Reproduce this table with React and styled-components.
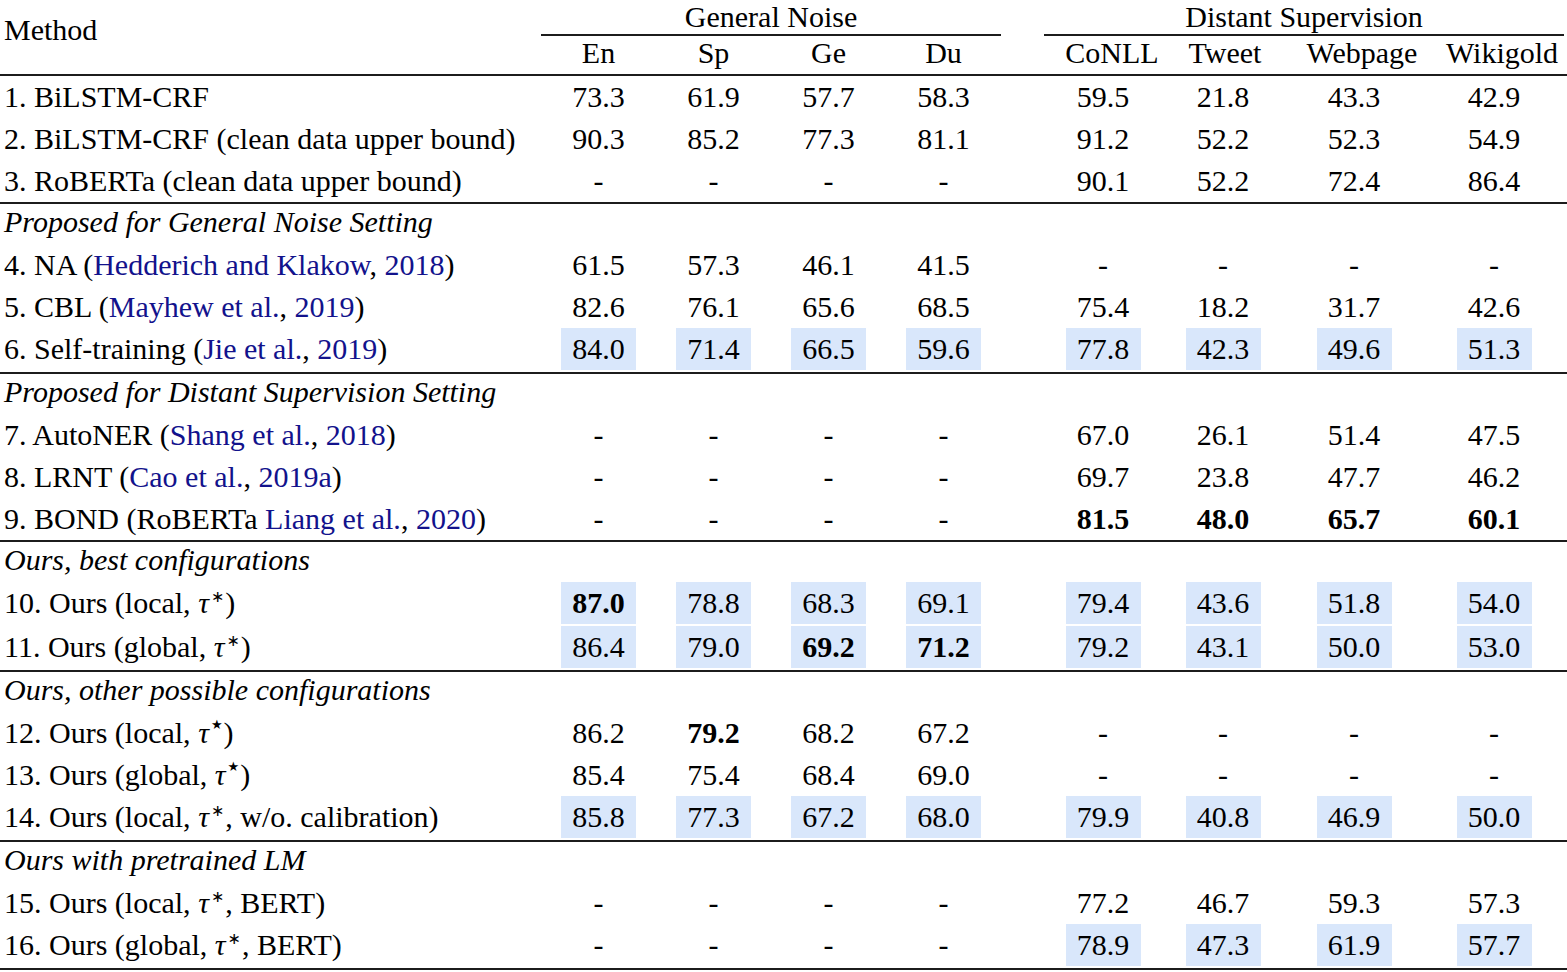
import React from "react";
import styled, { createGlobalStyle } from "styled-components";

const COLS = "541px repeat(4, 115px) 43px 118px 122px 140px 140px";

const GlobalStyle = createGlobalStyle`
  html, body { margin: 0; padding: 0; background: #ffffff; }
  body {
    font-family: "Liberation Serif", "Times New Roman", serif;
    font-size: 30px;
    color: #000000;
  }
`;

const Table = styled.div`
  width: 1567px;
`;

const HeaderGrid = styled.div`
  display: grid;
  grid-template-columns: ${COLS};
  grid-template-rows: 36px 38px;
`;

const MethodHead = styled.div`
  grid-column: 1;
  grid-row: 1 / span 2;
  padding: 9px 0 0 4px;
  line-height: 42px;
`;

const GroupHead = styled.div`
  grid-row: 1;
  grid-column: ${(p) => p.$col} / span 4;
  text-align: center;
  line-height: 34px;
  border-bottom: 2px solid #1c1c1c;
  white-space: nowrap;
`;

const SubHead = styled.div`
  grid-row: 2;
  text-align: center;
  line-height: 34px;
  padding-left: ${(p) => (p.$shift || 0) * 2}px;
  white-space: nowrap;
`;

const Block = styled.div`
  border-top: 2px solid #1c1c1c;
  border-bottom: ${(p) => (p.$last ? "2px solid #1c1c1c" : "none")};
`;

const SectionTitle = styled.div`
  font-style: italic;
  line-height: 36px;
  height: 40px;
  padding-left: 4px;
  white-space: nowrap;
`;

const Row = styled.div`
  display: grid;
  grid-template-columns: ${COLS};
  height: ${(p) => (p.$tall ? 44 : 42)}px;
  align-items: start;
`;

const MethodCell = styled.div`
  line-height: 42px;
  padding-left: 4px;
  white-space: nowrap;
`;

const Cite = styled.span`
  color: #12128c;
`;

const Tau = styled.span`
  font-style: italic;
`;

const Sup = styled.sup`
  font-family: "DejaVu Sans", sans-serif;
  font-size: ${(p) => (p.$star ? 13 : 16)}px;
  line-height: 0;
  vertical-align: ${(p) => (p.$star ? 14 : 11)}px;
  margin-left: 2px;
  margin-right: 1px;
`;

const Spacer = styled.div``;

const Value = styled.div`
  justify-self: center;
  width: 75px;
  height: 42px;
  line-height: 42px;
  text-align: center;
  background: ${(p) => (p.$hl ? "#d9e7fb" : "transparent")};
  font-weight: ${(p) => (p.$bold ? 700 : 400)};
`;

const T = ({ star }) => (
  <>
    <Tau>τ</Tau>
    <Sup $star={star}>{star ? "★" : "∗"}</Sup>
  </>
);

const ALL = [0, 1, 2, 3, 4, 5, 6, 7];

const rowsData = [
  {
    rows: [
      { m: <>1. BiLSTM-CRF</>, v: ["73.3", "61.9", "57.7", "58.3", "59.5", "21.8", "43.3", "42.9"] },
      { m: <>2. BiLSTM-CRF (clean data upper bound)</>, v: ["90.3", "85.2", "77.3", "81.1", "91.2", "52.2", "52.3", "54.9"] },
      { m: <>3. RoBERTa (clean data upper bound)</>, v: ["-", "-", "-", "-", "90.1", "52.2", "72.4", "86.4"] },
    ],
  },
  {
    title: "Proposed for General Noise Setting",
    rows: [
      { m: <>4. NA (<Cite>Hedderich and Klakow</Cite>, <Cite>2018</Cite>)</>, v: ["61.5", "57.3", "46.1", "41.5", "-", "-", "-", "-"] },
      { m: <>5. CBL (<Cite>Mayhew et al.</Cite>, <Cite>2019</Cite>)</>, v: ["82.6", "76.1", "65.6", "68.5", "75.4", "18.2", "31.7", "42.6"] },
      { m: <>6. Self-training (<Cite>Jie et al.</Cite>, <Cite>2019</Cite>)</>, v: ["84.0", "71.4", "66.5", "59.6", "77.8", "42.3", "49.6", "51.3"], hl: ALL },
    ],
  },
  {
    title: "Proposed for Distant Supervision Setting",
    rows: [
      { m: <>7. AutoNER (<Cite>Shang et al.</Cite>, <Cite>2018</Cite>)</>, v: ["-", "-", "-", "-", "67.0", "26.1", "51.4", "47.5"] },
      { m: <>8. LRNT (<Cite>Cao et al.</Cite>, <Cite>2019a</Cite>)</>, v: ["-", "-", "-", "-", "69.7", "23.8", "47.7", "46.2"] },
      { m: <>9. BOND (RoBERTa <Cite>Liang et al.</Cite>, <Cite>2020</Cite>)</>, v: ["-", "-", "-", "-", "81.5", "48.0", "65.7", "60.1"], bold: [4, 5, 6, 7] },
    ],
  },
  {
    title: "Ours, best configurations",
    rows: [
      { m: <>10. Ours (local, <T />)</>, v: ["87.0", "78.8", "68.3", "69.1", "79.4", "43.6", "51.8", "54.0"], hl: ALL, bold: [0] },
      { m: <>11. Ours (global, <T />)</>, v: ["86.4", "79.0", "69.2", "71.2", "79.2", "43.1", "50.0", "53.0"], hl: ALL, bold: [2, 3] },
    ],
  },
  {
    title: "Ours, other possible configurations",
    rows: [
      { m: <>12. Ours (local, <T star />)</>, v: ["86.2", "79.2", "68.2", "67.2", "-", "-", "-", "-"], bold: [1] },
      { m: <>13. Ours (global, <T star />)</>, v: ["85.4", "75.4", "68.4", "69.0", "-", "-", "-", "-"] },
      { m: <>14. Ours (local, <T />, w/o. calibration)</>, v: ["85.8", "77.3", "67.2", "68.0", "79.9", "40.8", "46.9", "50.0"], hl: ALL },
    ],
  },
  {
    title: "Ours with pretrained LM",
    rows: [
      { m: <>15. Ours (local, <T />, BERT)</>, v: ["-", "-", "-", "-", "77.2", "46.7", "59.3", "57.3"] },
      { m: <>16. Ours (global, <T />, BERT)</>, v: ["-", "-", "-", "-", "78.9", "47.3", "61.9", "57.7"], hl: [4, 5, 6, 7] },
    ],
  },
];

const subHeads = [
  { t: "En", col: 2 },
  { t: "Sp", col: 3 },
  { t: "Ge", col: 4 },
  { t: "Du", col: 5 },
  { t: "CoNLL", col: 7, shift: 9 },
  { t: "Tweet", col: 8, shift: 2 },
  { t: "Webpage", col: 9, shift: 8 },
  { t: "Wikigold", col: 10, shift: 8 },
];

function DataRow({ r }) {
  const hl = r.hl || [];
  const bold = r.bold || [];
  const cells = r.v.map((x, i) => (
    <Value key={i} $hl={hl.includes(i)} $bold={bold.includes(i)}>
      {x}
    </Value>
  ));
  return (
    <Row $tall={hl.length > 0}>
      <MethodCell>{r.m}</MethodCell>
      {cells.slice(0, 4)}
      <Spacer />
      {cells.slice(4)}
    </Row>
  );
}

export default function App() {
  return (
    <>
      <GlobalStyle />
      <Table>
        <HeaderGrid>
          <MethodHead>Method</MethodHead>
          <GroupHead $col={2}>General Noise</GroupHead>
          <GroupHead $col={7}>Distant Supervision</GroupHead>
          {subHeads.map((h) => (
            <SubHead key={h.t} $shift={h.shift} style={{ gridColumn: h.col }}>
              {h.t}
            </SubHead>
          ))}
        </HeaderGrid>
        {rowsData.map((b, bi) => (
          <Block key={bi} $last={bi === rowsData.length - 1}>
            {b.title && <SectionTitle>{b.title}</SectionTitle>}
            {b.rows.map((r, ri) => (
              <DataRow key={ri} r={r} />
            ))}
          </Block>
        ))}
      </Table>
    </>
  );
}
